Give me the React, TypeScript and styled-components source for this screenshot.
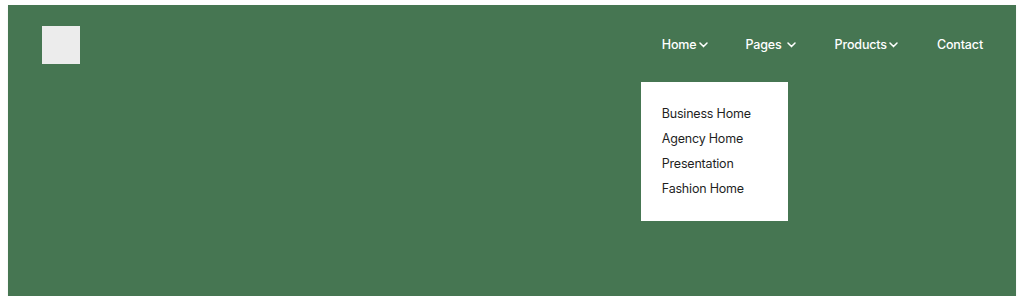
import React from 'react'
import styled, { createGlobalStyle } from 'styled-components'

const GlobalStyle = createGlobalStyle`
    body {
        margin: 0;
        padding: 5px 8px 0 8px;
        background: #ffffff;
        font-family: Inter, "Noto Sans", sans-serif;
    }
`

const Panel = styled.div`
    position: relative;
    height: 291px;
    background-color: #467652;
    box-shadow: 0 1px 2px rgba(0, 0, 0, 0.08);
`

const Header = styled.header`
    display: flex;
    align-items: flex-start;
    justify-content: space-between;
    padding: 21px 33px 0 34px;
`

const Logo = styled.div`
    width: 38px;
    height: 38px;
    background-color: #ececec;
`

const Nav = styled.nav`
    display: flex;
    align-items: center;
    height: 36px;
    gap: 38px;
`

const NavItem = styled.div<{ $gap?: number; $iconGap?: number }>`
    position: relative;
    display: flex;
    align-items: center;
    gap: ${(p) => p.$iconGap ?? 3}px;
    margin-left: ${(p) => p.$gap ?? 0}px;
    color: #ffffff;
    font-size: 12.5px;
    font-weight: 500;
    letter-spacing: -0.15px;
    cursor: pointer;
    svg {
        width: 9px;
        height: 6px;
        margin-top: 2px;
    }
`

const Dropdown = styled.ul`
    position: absolute;
    top: 45px;
    left: -21px;
    width: 147px;
    height: 139px;
    box-sizing: border-box;
    margin: 0;
    padding: 23px 0 0 21px;
    list-style: none;
    background-color: #ffffff;
    display: flex;
    flex-direction: column;
    gap: 7px;
`

const DropdownLink = styled.li`
    color: #1f1f1f;
    font-size: 12.5px;
    font-weight: 400;
    line-height: 18px;
    letter-spacing: -0.2px;
    white-space: nowrap;
`

const Chevron = () => (
    <svg viewBox="0 0 9 6" fill="none" stroke="currentColor" strokeWidth="1.5" strokeLinecap="round" strokeLinejoin="round">
        <path d="M1 1 L4.5 4.6 L8 1" />
    </svg>
)

const homeLinks = ['Business Home', 'Agency Home', 'Presentation', 'Fashion Home']

const navItems = [
    { id: 1, label: 'Home', chevron: true, gap: 0, iconGap: 3 },
    { id: 2, label: 'Pages', chevron: true, gap: -1, iconGap: 5 },
    { id: 3, label: 'Products', chevron: true, gap: 1, iconGap: 2 },
    { id: 4, label: 'Contact', chevron: false, gap: 1, iconGap: 0 },
]

const App = () => {
    return (
        <>
            <GlobalStyle />
            <Panel>
                <Header>
                    <Logo />
                    <Nav>
                        {navItems.map((item) => (
                            <NavItem key={item.id} $gap={item.gap} $iconGap={item.iconGap}>
                                {item.label}
                                {item.chevron && <Chevron />}
                                {item.id === 1 && (
                                    <Dropdown>
                                        {homeLinks.map((link) => (
                                            <DropdownLink key={link}>{link}</DropdownLink>
                                        ))}
                                    </Dropdown>
                                )}
                            </NavItem>
                        ))}
                    </Nav>
                </Header>
            </Panel>
        </>
    )
}

export default App
